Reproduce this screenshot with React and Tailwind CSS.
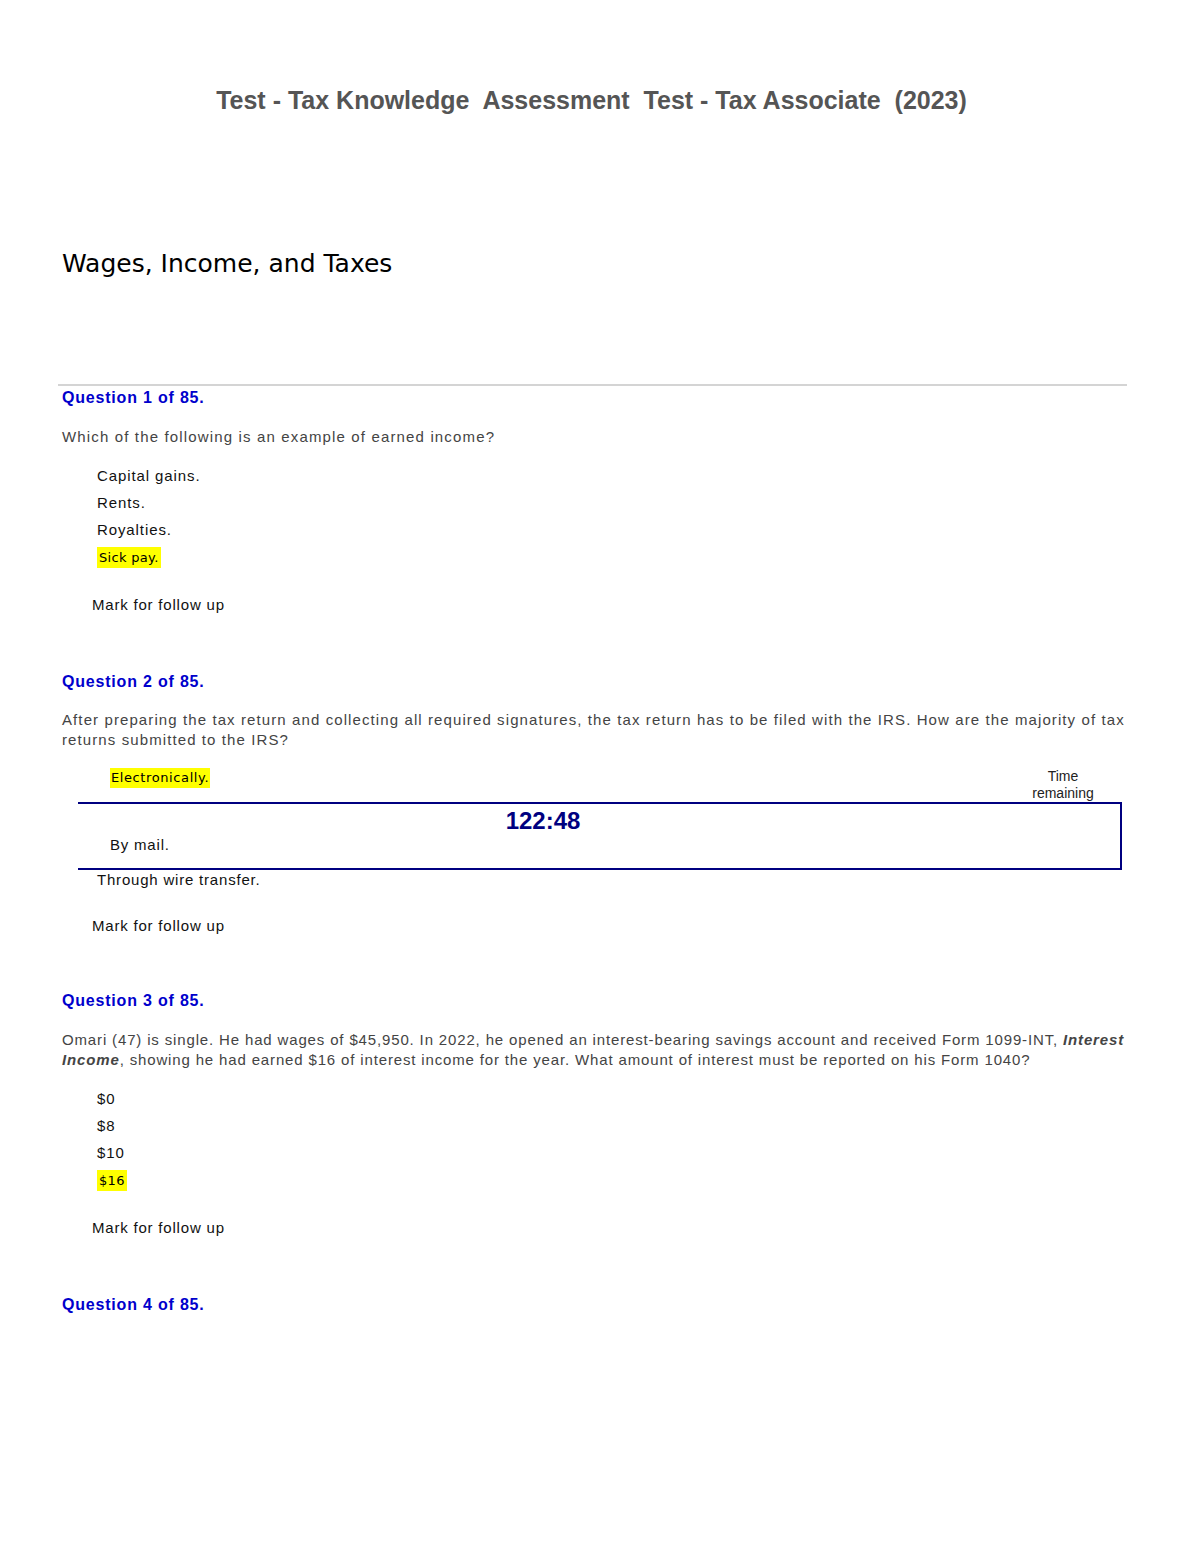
const Option = ({ children, hl }) => (
  <div className="h-[27px] leading-[27px] pl-[35px]">
    {hl ? (
      <span className="inline-block bg-[#ffff00] px-[2px] leading-[21px] text-[13px] tracking-[0.3px] font-['DejaVu_Sans',sans-serif] text-black">
        {children}
      </span>
    ) : (
      <span className="text-[15px] tracking-[0.9px] text-[#111]">{children}</span>
    )}
  </div>
);

const QHead = ({ n, className }) => (
  <div className={`h-[20px] leading-[20px] text-[16px] tracking-[0.8px] font-bold text-[#0000cc] ${className}`}>
    Question {n} of 85.
  </div>
);

const Mark = ({ className }) => (
  <div className={`h-[20px] leading-[20px] pl-[30px] text-[15px] tracking-[0.8px] text-[#111] ${className}`}>Mark for follow up</div>
);

export default function App() {
  return (
    <div className="relative min-h-[1551px] w-[1200px] bg-white font-['Liberation_Sans',Arial,sans-serif]">
      <div className="pt-[86px] pr-[17px] h-[114px] leading-[28px] text-center text-[25px] font-bold text-[#555] whitespace-pre">
        {'Test - Tax Knowledge  Assessment  Test - Tax Associate  (2023)'}
      </div>

      <div className="mt-[135px] ml-[62px] h-[30px] leading-[30px] text-[25px] text-black font-['DejaVu_Sans',sans-serif]">
        Wages, Income, and Taxes
      </div>

      <div className="mt-[105px] ml-[58px] w-[1069px] h-[2px] bg-[#d4d4d4]" />

      <div className="pl-[62px] pr-[20px]">
        <QHead n={1} className="mt-[2px]" />
        <div className="mt-[19px] leading-[20px] text-[15px] tracking-[1.15px] text-[#444]">
          Which of the following is an example of earned income?
        </div>
        <div className="mt-[14.5px]">
          <Option>Capital gains.</Option>
          <Option>Rents.</Option>
          <Option>Royalties.</Option>
          <Option hl>Sick pay.</Option>
        </div>
        <Mark className="mt-[25.5px]" />

        <QHead n={2} className="mt-[57px]" />
        <div className="mt-[18px] leading-[20px] text-[15px] tracking-[1.1px] text-[#444] whitespace-nowrap">
          After preparing the tax return and collecting all required signatures, the tax return has to be filed with the IRS. How are the majority of tax
          <br />
          returns submitted to the IRS?
        </div>
        <div className="mt-[17px] h-[20px] leading-[20px] pl-[48px]">
          <span className="inline-block bg-[#ffff00] px-[1px] leading-[20px] text-[13px] tracking-[0.6px] font-['DejaVu_Sans',sans-serif] text-black">
            Electronically.
          </span>
        </div>
        <div className="mt-[48px] h-[20px] leading-[20px] pl-[48px] text-[15px] tracking-[0.8px] text-[#111]">By mail.</div>
        <div className="mt-[15px] h-[20px] leading-[20px] pl-[35px] text-[15px] tracking-[0.8px] text-[#111]">Through wire transfer.</div>
        <Mark className="mt-[26px]" />

        <QHead n={3} className="mt-[55px]" />
        <div className="mt-[19px] leading-[20px] text-[15px] tracking-[0.85px] text-[#444] whitespace-nowrap">
          Omari (47) is single. He had wages of $45,950. In 2022, he opened an interest-bearing savings account and received Form 1099-INT, <i className="font-bold">Interest</i>
          <br />
          <i className="font-bold">Income</i>, showing he had earned $16 of interest income for the year. What amount of interest must be reported on his Form 1040?
        </div>
        <div className="mt-[14.5px]">
          <Option>$0</Option>
          <Option>$8</Option>
          <Option>$10</Option>
          <Option hl>$16</Option>
        </div>
        <Mark className="mt-[25.5px]" />

        <QHead n={4} className="mt-[57px]" />
      </div>

      {/* floating timer */}
      <div className="absolute left-[1000px] top-[768px] w-[126px] text-center text-[14px] leading-[17px] text-[#222]">
        Time<br />remaining
      </div>
      <div className="absolute left-[78px] top-[802px] w-[1044px] h-[68px] border-t-2 border-r-2 border-b-2 border-[#000080]">
        <div className="absolute left-[425px] top-[3px] w-[80px] text-center text-[24px] leading-[28px] font-bold text-[#000080]">
          122:48
        </div>
      </div>
    </div>
  );
}
